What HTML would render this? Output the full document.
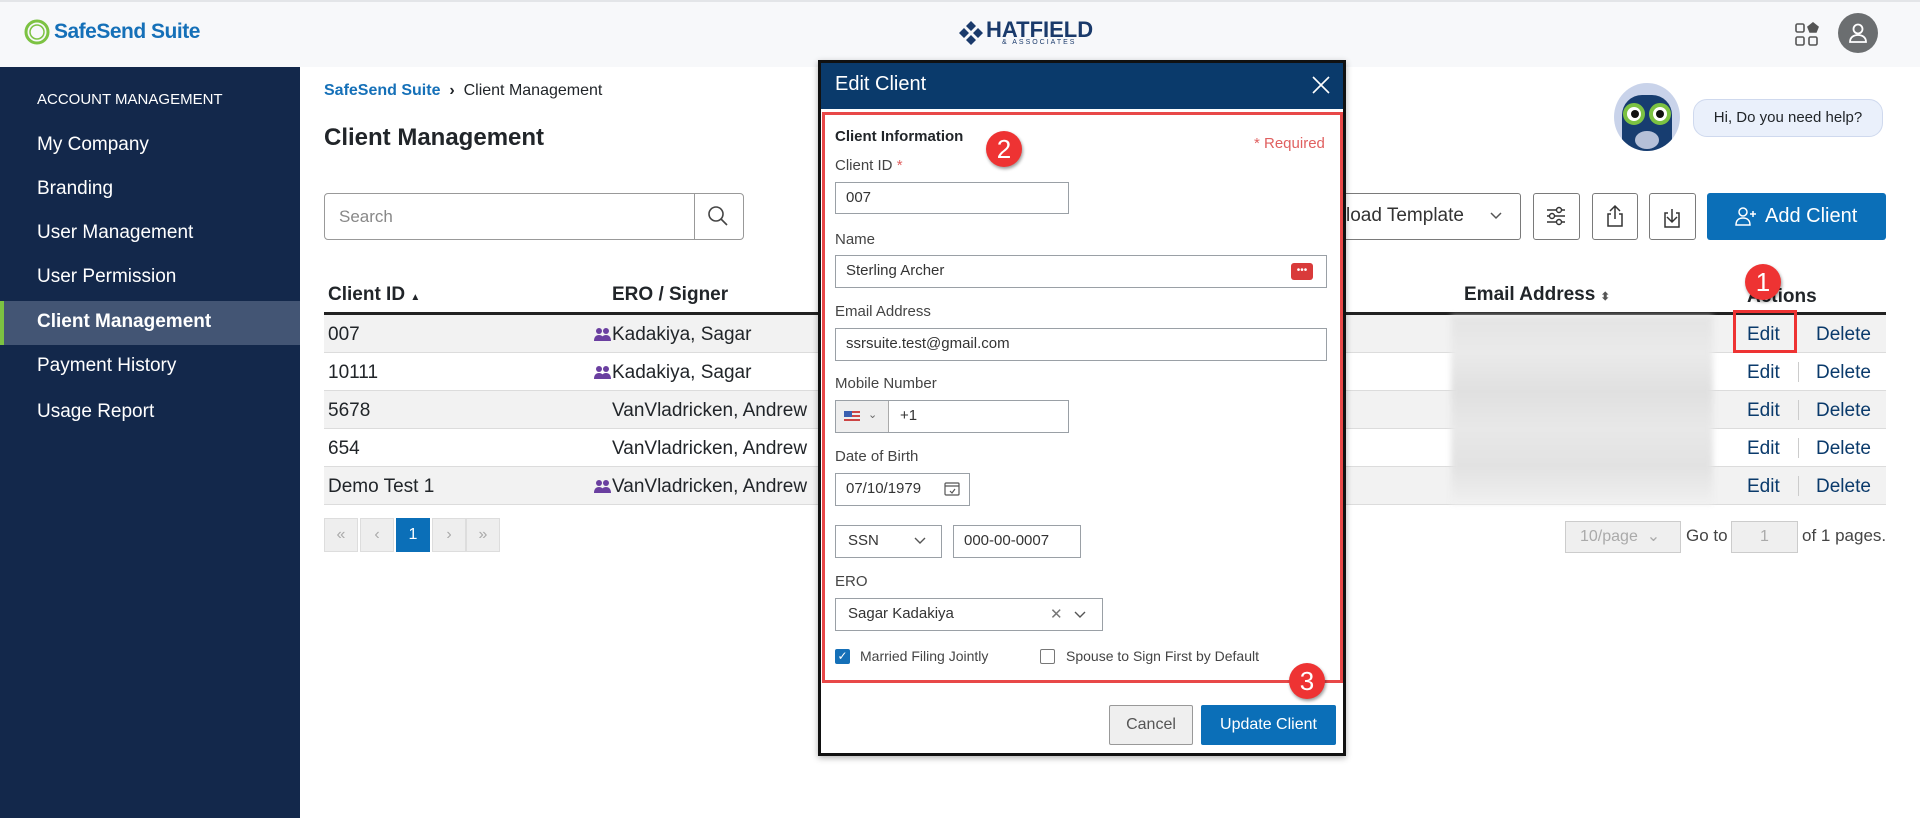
<!DOCTYPE html>
<html><head><meta charset="utf-8"><style>
*{box-sizing:border-box;margin:0;padding:0}
body{width:1920px;height:818px;overflow:hidden;background:#fff;font-family:"Liberation Sans",sans-serif;color:#212529;position:relative}
.a{position:absolute}
.hdr{left:0;top:0;width:1920px;height:67px;background:#f7f8fa;border-top:2px solid #e3e5e8}
.side{left:0;top:67px;width:300px;height:751px;background:#13284b}
.side div{position:absolute;left:37px;color:#fff;font-size:19px}
.row{position:absolute;left:324px;width:1562px;height:38px;border-bottom:1px solid #dcdcdc;font-size:19px}
.row span{position:absolute;top:9px}
.row svg{position:absolute;left:270px;top:12px}
.lbl{position:absolute;left:835px;font-size:15px;color:#444}
.inp{position:absolute;border:1px solid #9aa0a6;background:#fff;font-size:15px;color:#333;padding-left:10px;line-height:30px}
.btn{position:absolute;border:1px solid #7a7a7a;border-radius:3px;background:#fff}
.badge{position:absolute;width:36px;height:36px;border-radius:50%;background:#e33;color:#fff;font-size:26px;text-align:center;line-height:36px;box-shadow:1px 2px 3px rgba(0,0,0,.4)}
.ed{position:absolute;left:1747px;color:#0a3a6b;font-size:19px}
.dl{position:absolute;left:1816px;color:#0a3a6b;font-size:19px}
.sep{position:absolute;left:1798px;width:1px;height:20px;background:#ccc}
.pg{position:absolute;top:518px;width:34px;height:34px;background:#eee;border:1px solid #ddd;color:#aaa;text-align:center;line-height:32px}
</style></head><body>
<div class="a hdr"></div>
<svg class="a" style="left:24px;top:19px" width="26" height="26" viewBox="0 0 26 26"><circle cx="13" cy="13" r="11" fill="none" stroke="#7cc242" stroke-width="3"/><circle cx="13" cy="13" r="7" fill="none" stroke="#7cc242" stroke-width="1.5"/></svg>
<div class="a" style="left:54px;top:20px;font-size:21px;color:#1570b8;font-weight:bold;letter-spacing:-0.5px">SafeSend Suite</div>
<svg class="a" style="left:959px;top:19px" width="24" height="28" viewBox="0 0 24 28"><path d="M12 2l5 5-5 5-5-5zM5 9l5 5-5 5-5-5zM19 9l5 5-5 5-5-5zM12 16l5 5-5 5-5-5z" fill="#1a3a6b"/></svg>
<div class="a" style="left:986px;top:17px;font-size:22px;font-weight:bold;color:#1a3a6b">HATFIELD</div>
<div class="a" style="left:1002px;top:39px;font-size:7px;color:#1a3a6b;letter-spacing:2px">&amp; ASSOCIATES</div>
<svg class="a" style="left:1794px;top:22px" width="26" height="26" viewBox="0 0 26 26" fill="none" stroke="#555" stroke-width="1.6"><rect x="2" y="2" width="8" height="8" rx="1.5"/><rect x="2" y="15" width="8" height="8" rx="1.5"/><rect x="15" y="15" width="8" height="8" rx="1.5"/><path d="M19 1l5 4-2 5h-6l-2-5z" fill="#555"/></svg>
<div class="a" style="left:1838px;top:13px;width:40px;height:40px;border-radius:50%;background:#6b6e70"></div>
<svg class="a" style="left:1848px;top:22px" width="20" height="22" viewBox="0 0 20 22" fill="none" stroke="#fff" stroke-width="1.8"><circle cx="10" cy="7" r="4.5"/><path d="M2 20c0-5 4-7 8-7s8 2 8 7z"/></svg>

<div class="a side">
<div style="top:24px;font-size:15px">ACCOUNT MANAGEMENT</div>
<div style="top:67px">My Company</div>
<div style="top:111px">Branding</div>
<div style="top:155px">User Management</div>
<div style="top:199px">User Permission</div>
<div style="position:absolute;left:0;top:234px;width:300px;height:44px;background:#435574;border-left:4px solid #7cc242"></div>
<div style="top:244px;font-weight:bold">Client Management</div>
<div style="top:288px">Payment History</div>
<div style="top:334px">Usage Report</div>
</div>

<div class="a" style="left:324px;top:82px;font-size:16px"><b style="color:#1570b8">SafeSend Suite</b> &nbsp;<b>›</b>&nbsp; Client Management</div>
<div class="a" style="left:324px;top:124px;font-size:24px;font-weight:bold">Client Management</div>
<div class="a" style="left:324px;top:193px;width:420px;height:47px;border:1px solid #999;border-radius:4px"></div>
<div class="a" style="left:694px;top:194px;width:1px;height:45px;background:#999"></div>
<div class="a" style="left:339px;top:207px;font-size:17px;color:#888">Search</div>
<svg class="a" style="left:707px;top:205px" width="22" height="22" viewBox="0 0 22 22" fill="none" stroke="#444" stroke-width="1.6"><circle cx="9" cy="9" r="7"/><path d="M14 14l6 6"/></svg>

<div class="a" style="left:1614px;top:83px;width:66px;height:68px;border-radius:50%;background:#c9d3ea;overflow:hidden"><div style="position:absolute;left:8px;top:12px;width:50px;height:56px;background:#173d70;border-radius:20px 20px 10px 10px"></div><div style="position:absolute;left:9px;top:20px;width:22px;height:22px;border-radius:50%;background:#fff;border:4px solid #7cc242"></div><div style="position:absolute;left:35px;top:20px;width:22px;height:22px;border-radius:50%;background:#fff;border:4px solid #7cc242"></div><div style="position:absolute;left:17px;top:27px;width:8px;height:8px;border-radius:50%;background:#111"></div><div style="position:absolute;left:42px;top:27px;width:8px;height:8px;border-radius:50%;background:#111"></div><div style="position:absolute;left:21px;top:48px;width:24px;height:18px;border-radius:50%;background:#b5c0d8"></div></div>
<div class="a" style="left:1693px;top:99px;width:190px;height:38px;border:1px solid #cfd9ee;border-radius:14px;background:#eaf0fb;font-size:15px;text-align:center;line-height:36px">Hi, Do you need help?</div>

<div class="btn" style="left:1300px;top:193px;width:221px;height:47px"></div>
<div class="a" style="left:1346px;top:205px;font-size:19px;color:#333">load Template</div>
<svg class="a" style="left:1490px;top:212px" width="12" height="8" viewBox="0 0 12 8" fill="none" stroke="#555" stroke-width="1.5"><path d="M1 1l5 5 5-5"/></svg>
<div class="btn" style="left:1533px;top:193px;width:47px;height:47px"></div>
<svg class="a" style="left:1545px;top:205px" width="22" height="22" viewBox="0 0 22 22" fill="none" stroke="#333" stroke-width="1.4"><path d="M2 5h18M2 11h18M2 17h18"/><circle cx="14" cy="5" r="2.5" fill="#fff"/><circle cx="7" cy="11" r="2.5" fill="#fff"/><circle cx="14" cy="17" r="2.5" fill="#fff"/></svg>
<div class="btn" style="left:1592px;top:193px;width:46px;height:47px"></div>
<svg class="a" style="left:1604px;top:204px" width="22" height="24" viewBox="0 0 22 24" fill="none" stroke="#333" stroke-width="1.5"><path d="M11 2v13M6 7l5-5 5 5M7 10H4v12h14V10h-3"/></svg>
<div class="btn" style="left:1649px;top:193px;width:47px;height:47px"></div>
<svg class="a" style="left:1661px;top:205px" width="22" height="24" viewBox="0 0 22 24" fill="none" stroke="#333" stroke-width="1.5"><path d="M11 4v13M6 12l5 5 5-5M7 8H4v14h14V8h-3"/></svg>
<div class="a" style="left:1707px;top:193px;width:179px;height:47px;background:#0b6fb8;border-radius:3px;color:#fff;font-size:20px;line-height:47px;padding-left:58px">Add Client</div>
<svg class="a" style="left:1734px;top:206px" width="24" height="20" viewBox="0 0 24 20" fill="none" stroke="#fff" stroke-width="1.5"><circle cx="9" cy="6" r="4"/><path d="M2 19c0-5 3-7 7-7s7 2 7 7zM19 5v6M16 8h6"/></svg>

<div class="a" style="left:328px;top:284px;font-size:19px;font-weight:bold">Client ID <span style="font-size:10px">▲</span></div>
<div class="a" style="left:612px;top:284px;font-size:19px;font-weight:bold">ERO / Signer</div>
<div class="a" style="left:1464px;top:284px;font-size:19px;font-weight:bold">Email Address <span style="font-size:11px;color:#555">⬍</span></div>
<div class="a" style="left:1747px;top:286px;font-size:19px;font-weight:bold">Actions</div>
<div class="a" style="left:324px;top:312px;width:1562px;height:3px;background:#222"></div>

<svg width="0" height="0" style="position:absolute"><defs><g id="pp"><circle cx="5" cy="4" r="3" fill="#6a3fa0"/><circle cx="12" cy="4" r="3" fill="#6a3fa0"/><path d="M0 14c0-4 2-6 5-6s5 2 5 6zM7 14c0-4 2-6 5-6s5 2 5 6z" fill="#6a3fa0"/></g></defs></svg>
<div class="row" style="top:315px;background:#f2f2f2"><span style="left:4px">007</span><svg width="17" height="14"><use href="#pp"/></svg><span style="left:288px">Kadakiya, Sagar</span></div>
<div class="row" style="top:353px"><span style="left:4px">10111</span><svg width="17" height="14"><use href="#pp"/></svg><span style="left:288px">Kadakiya, Sagar</span></div>
<div class="row" style="top:391px;background:#f2f2f2"><span style="left:4px">5678</span><span style="left:288px">VanVladricken, Andrew</span></div>
<div class="row" style="top:429px"><span style="left:4px">654</span><span style="left:288px">VanVladricken, Andrew</span></div>
<div class="row" style="top:467px;background:#f2f2f2"><span style="left:4px">Demo Test 1</span><svg width="17" height="14"><use href="#pp"/></svg><span style="left:288px">VanVladricken, Andrew</span></div>
<div class="a" style="left:1451px;top:316px;width:262px;height:188px;background:linear-gradient(#e4e4e4,#eaeaea 20%,#e0e0e0 40%,#e8e8e8 60%,#e2e2e2 80%,#f0f0f0);filter:blur(3px)"></div>

<div class="ed" style="top:324px">Edit</div><div class="dl" style="top:324px">Delete</div>
<div class="ed" style="top:362px">Edit</div><div class="sep" style="top:362px"></div><div class="dl" style="top:362px">Delete</div>
<div class="ed" style="top:400px">Edit</div><div class="sep" style="top:400px"></div><div class="dl" style="top:400px">Delete</div>
<div class="ed" style="top:438px">Edit</div><div class="sep" style="top:438px"></div><div class="dl" style="top:438px">Delete</div>
<div class="ed" style="top:476px">Edit</div><div class="sep" style="top:476px"></div><div class="dl" style="top:476px">Delete</div>
<div class="a" style="left:1733px;top:310px;width:64px;height:43px;border:3px solid #e33"></div>
<div class="badge" style="left:1745px;top:264px">1</div>

<div class="pg" style="left:324px">«</div>
<div class="pg" style="left:360px">‹</div>
<div class="a" style="left:396px;top:518px;width:34px;height:34px;background:#0b6fb8;color:#fff;text-align:center;line-height:34px;font-size:16px">1</div>
<div class="pg" style="left:432px">›</div>
<div class="pg" style="left:466px">»</div>
<div class="a" style="left:1565px;top:521px;width:116px;height:32px;background:#efefef;border:1px solid #ccc;color:#aaa;font-size:16px;line-height:30px;padding-left:14px">10/page &nbsp;⌄</div>
<div class="a" style="left:1686px;top:526px;font-size:17px;color:#444">Go to</div>
<div class="a" style="left:1731px;top:521px;width:67px;height:32px;background:#efefef;border:1px solid #ccc;color:#aaa;font-size:16px;line-height:30px;text-align:center">1</div>
<div class="a" style="left:1802px;top:526px;font-size:17px;color:#444">of 1 pages.</div>

<!-- modal -->
<div class="a" style="left:818px;top:60px;width:528px;height:696px;background:#fff;border:3px solid #111;box-shadow:0 2px 6px rgba(0,0,0,.3)"></div>
<div class="a" style="left:821px;top:63px;width:522px;height:46px;background:#0a3a6b"></div>
<div class="a" style="left:835px;top:73px;font-size:20px;color:#fff">Edit Client</div>
<svg class="a" style="left:1312px;top:76px" width="18" height="18" viewBox="0 0 18 18" stroke="#fff" stroke-width="1.6"><path d="M1 1l16 16M17 1L1 17"/></svg>
<div class="a" style="left:822px;top:112px;width:521px;height:571px;border:3px solid #e84848"></div>
<div class="a" style="left:835px;top:128px;font-size:15px;font-weight:bold">Client Information</div>
<div class="a" style="left:1254px;top:135px;font-size:15px;color:#e06060">* Required</div>
<div class="badge" style="left:986px;top:131px">2</div>
<div class="lbl" style="top:157px">Client ID <span style="color:#e06060">*</span></div>
<div class="inp" style="left:835px;top:182px;width:234px;height:32px">007</div>
<div class="lbl" style="top:231px">Name</div>
<div class="inp" style="left:835px;top:255px;width:492px;height:33px">Sterling Archer</div>
<div class="a" style="left:1291px;top:263px;width:22px;height:17px;background:#d93a3a;border-radius:3px;color:#fff;font-size:10px;text-align:center;line-height:15px">•••</div>
<div class="lbl" style="top:303px">Email Address</div>
<div class="inp" style="left:835px;top:328px;width:492px;height:33px">ssrsuite.test@gmail.com</div>
<div class="lbl" style="top:375px">Mobile Number</div>
<div class="inp" style="left:835px;top:400px;width:234px;height:33px;padding-left:64px">+1</div>
<div class="a" style="left:836px;top:401px;width:53px;height:31px;background:#eee;border-right:1px solid #aaa"></div>
<div class="a" style="left:844px;top:411px;width:16px;height:10px;background:linear-gradient(#c44 0,#c44 20%,#eee 20%,#eee 40%,#c44 40%,#c44 60%,#eee 60%,#eee 80%,#c44 80%)"><div style="width:8px;height:6px;background:#3a5fb0"></div></div>
<div class="a" style="left:868px;top:408px;font-size:11px;color:#666">⌄</div>
<div class="lbl" style="top:448px">Date of Birth</div>
<div class="inp" style="left:835px;top:473px;width:135px;height:33px">07/10/1979</div>
<svg class="a" style="left:944px;top:482px" width="16" height="14" viewBox="0 0 16 14" fill="none" stroke="#555" stroke-width="1.2"><rect x="1" y="1" width="14" height="12" rx="1"/><path d="M1 4h14M6 9l2 2 3-4"/></svg>
<div class="inp" style="left:835px;top:525px;width:107px;height:33px;padding-left:12px">SSN</div>
<svg class="a" style="left:914px;top:537px" width="12" height="8" viewBox="0 0 12 8" fill="none" stroke="#555" stroke-width="1.4"><path d="M1 1l5 5 5-5"/></svg>
<div class="inp" style="left:953px;top:525px;width:128px;height:33px">000-00-0007</div>
<div class="lbl" style="top:573px">ERO</div>
<div class="inp" style="left:835px;top:598px;width:268px;height:33px;padding-left:12px">Sagar Kadakiya</div>
<div class="a" style="left:1050px;top:605px;font-size:15px;color:#777">✕</div>
<svg class="a" style="left:1074px;top:611px" width="12" height="8" viewBox="0 0 12 8" fill="none" stroke="#555" stroke-width="1.4"><path d="M1 1l5 5 5-5"/></svg>
<div class="a" style="left:835px;top:649px;width:15px;height:15px;background:#1570b8;border-radius:2px;color:#fff;font-size:12px;text-align:center;line-height:15px">✓</div>
<div class="a" style="left:860px;top:648px;font-size:14px;color:#444">Married Filing Jointly</div>
<div class="a" style="left:1040px;top:649px;width:15px;height:15px;border:1px solid #777;border-radius:2px"></div>
<div class="a" style="left:1066px;top:648px;font-size:14px;color:#444">Spouse to Sign First by Default</div>
<div class="badge" style="left:1289px;top:663px">3</div>
<div class="a" style="left:1109px;top:705px;width:84px;height:40px;background:#efefef;border:1px solid #999;border-radius:2px;font-size:16px;color:#555;text-align:center;line-height:38px">Cancel</div>
<div class="a" style="left:1201px;top:705px;width:135px;height:40px;background:#0b6fb8;border-radius:2px;font-size:16px;color:#fff;text-align:center;line-height:40px">Update Client</div>
</body></html>
